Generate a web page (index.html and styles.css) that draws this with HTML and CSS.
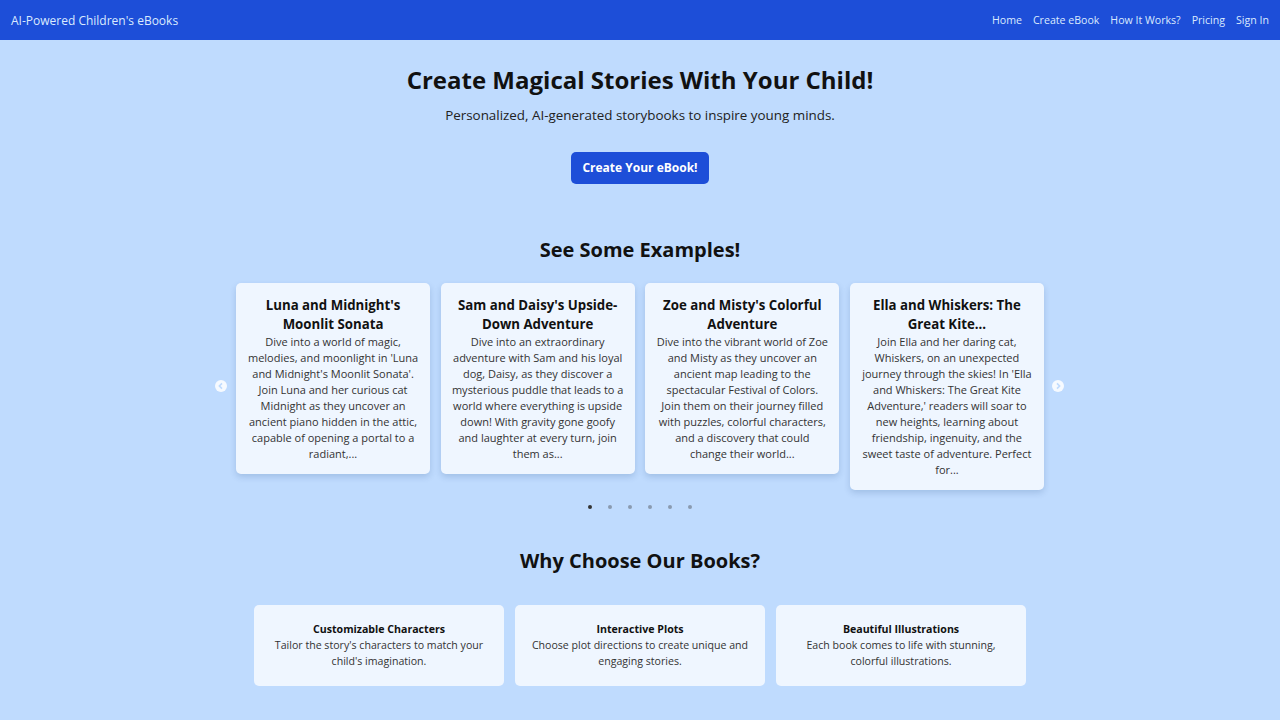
FILE: index.html
```html
<!doctype html>
<html>
 <head>
  <meta charset="UTF-8">
  <title>AI-Powered Children's eBooks</title>
  <link rel="stylesheet" href="styles.css">
 </head>
 <body>
  <!-- top bar -->
  <header class="topbar">
    <a class="brand" href="#">AI-Powered Children's eBooks</a>
    <nav class="menu">
      <a href="#">Home</a>
      <a href="#">Create eBook</a>
      <a href="#">How It Works?</a>
      <a href="#">Pricing</a>
      <a href="#">Sign In</a>
    </nav>
  </header>

  <!-- hero -->
  <section class="hero">
    <h1>Create Magical Stories With Your Child!</h1>
    <p class="lead">Personalized, AI-generated storybooks to inspire young minds.</p>
    <a class="btn" href="#">Create Your eBook!</a>
  </section>

  <!-- examples carousel -->
  <section class="examples">
    <h2>See Some Examples!</h2>
    <div class="carousel">
      <button class="arrow prev">
        <svg width="12" height="12" viewBox="0 0 12 12"><circle cx="6" cy="6" r="6" fill="#fff" opacity="0.85"/><path d="M7 3.4 4.4 6 7 8.6" fill="none" stroke="#bfdbfe" stroke-width="1.6"/></svg>
      </button>
      <div class="track">
        <div class="book">
          <h3>Luna and Midnight's Moonlit Sonata</h3>
          <p>Dive into a world of magic, melodies, and moonlight in 'Luna and Midnight's Moonlit Sonata'. Join Luna and her curious cat Midnight as they uncover an ancient piano hidden in the attic, capable of opening a portal to a radiant,...</p>
        </div>
        <div class="book">
          <h3>Sam and Daisy's Upside-Down Adventure</h3>
          <p>Dive into an extraordinary adventure with Sam and his loyal dog, Daisy, as they discover a mysterious puddle that leads to a world where everything is upside down! With gravity gone goofy and laughter at every turn, join them as...</p>
        </div>
        <div class="book">
          <h3>Zoe and Misty's Colorful Adventure</h3>
          <p>Dive into the vibrant world of Zoe and Misty as they uncover an ancient map leading to the spectacular Festival of Colors. Join them on their journey filled with puzzles, colorful characters, and a discovery that could change their world...</p>
        </div>
        <div class="book">
          <h3>Ella and Whiskers: The Great Kite...</h3>
          <p>Join Ella and her daring cat, Whiskers, on an unexpected journey through the skies! In 'Ella and Whiskers: The Great Kite Adventure,' readers will soar to new heights, learning about friendship, ingenuity, and the sweet taste of adventure. Perfect for...</p>
        </div>
      </div>
      <button class="arrow next">
        <svg width="12" height="12" viewBox="0 0 12 12"><circle cx="6" cy="6" r="6" fill="#fff" opacity="0.85"/><path d="M5 3.4 7.6 6 5 8.6" fill="none" stroke="#bfdbfe" stroke-width="1.6"/></svg>
      </button>
    </div>
    <ul class="dots">
      <li class="active"></li>
      <li></li>
      <li></li>
      <li></li>
      <li></li>
      <li></li>
    </ul>
  </section>

  <!-- features -->
  <section class="why">
    <h2>Why Choose Our Books?</h2>
    <div class="features">
      <div class="feature">
        <h4>Customizable Characters</h4>
        <p>Tailor the story's characters to match your child's imagination.</p>
      </div>
      <div class="feature">
        <h4>Interactive Plots</h4>
        <p>Choose plot directions to create unique and engaging stories.</p>
      </div>
      <div class="feature">
        <h4>Beautiful Illustrations</h4>
        <p>Each book comes to life with stunning, colorful illustrations.</p>
      </div>
    </div>
  </section>
 </body>
</html>
```

FILE: styles.css
```css
*{
	margin:0;
	padding:0;
	box-sizing:border-box;
}
body{
	font-family:"Open Sans","Noto Sans",sans-serif;
	background-color:#bfdbfe;
	color:#111;
}
a{
	text-decoration:none;
}
ul{
	list-style:none;
}

/* top bar */
.topbar{
	height:40px;
	background-color:#1d4ed8;
	display:flex;
	align-items:center;
	justify-content:space-between;
	padding:0 11px;
}
.brand{
	color:#dbeafe;
	font-size:12px;
}
.menu{
	display:flex;
	gap:11px;
}
.menu a{
	color:#dbeafe;
	font-size:10.6px;
}

/* hero */
.hero{
	text-align:center;
	padding-top:22px;
}
.hero h1{
	font-size:24px;
	line-height:36px;
	font-weight:700;
}
.lead{
	font-size:13.4px;
	line-height:24px;
	margin-top:5px;
	color:#222;
}
.btn{
	display:inline-block;
	margin-top:25px;
	height:32px;
	line-height:32px;
	padding:0 11px;
	background-color:#1d4ed8;
	color:#fff;
	font-size:12px;
	font-weight:700;
	border-radius:5px;
}

/* examples */
.examples{
	margin-top:51px;
	text-align:center;
}
.examples h2, .why h2{
	font-size:20px;
	line-height:30px;
	font-weight:700;
}
.carousel{
	position:relative;
	width:808px;
	margin:18px auto 0;
}
.track{
	display:grid;
	grid-template-columns:repeat(4,1fr);
	gap:10.5px;
	align-items:start;
}
.book{
	background-color:#eff6ff;
	border-radius:5px;
	padding:13px 11px 12px;
	box-shadow:0 3px 6px rgba(30,64,120,0.18);
}
.book h3{
	font-size:13.25px;
	line-height:19px;
	font-weight:700;
}
.book p{
	font-size:11px;
	line-height:16px;
	color:#333;
}
.arrow{
	position:absolute;
	top:97px;
	border:none;
	background:none;
	width:12px;
	height:12px;
}
.arrow svg{
	display:block;
}
.prev{
	left:-21px;
}
.next{
	right:-20px;
}
.dots{
	display:flex;
	justify-content:center;
	gap:16px;
	margin-top:15px;
}
.dots li{
	width:4px;
	height:4px;
	border-radius:50%;
	background-color:#8a9ab0;
}
.dots li.active{
	background-color:#333;
}

/* features */
.why{
	margin-top:37px;
	text-align:center;
}
.features{
	display:flex;
	justify-content:center;
	gap:11px;
	margin-top:29px;
}
.feature{
	width:250px;
	height:81px;
	background-color:#eff6ff;
	border-radius:5px;
	padding-top:16px;
}
.feature h4{
	font-size:10.6px;
	line-height:16px;
	font-weight:700;
}
.feature p{
	font-size:10.6px;
	line-height:16px;
	color:#333;
	padding:0 14px;
}
```
